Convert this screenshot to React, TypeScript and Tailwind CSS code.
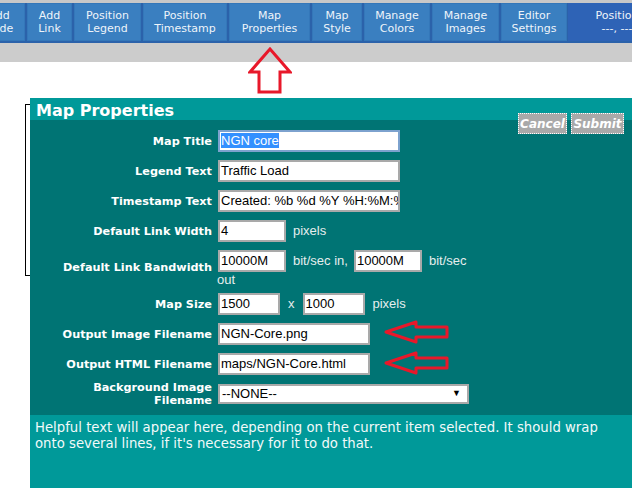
import React from 'react';

const tools = [
  { top: 'Add', bottom: 'Node', w: 'w-[52px]' },
  { top: 'Add', bottom: 'Link', w: 'w-[45px]' },
  { top: 'Position', bottom: 'Legend', w: 'w-[67px]' },
  { top: 'Position', bottom: 'Timestamp', w: 'w-[84px]' },
  { top: 'Map', bottom: 'Properties', w: 'w-[81px]' },
  { top: 'Map', bottom: 'Style', w: 'w-[50px]' },
  { top: 'Manage', bottom: 'Colors', w: 'w-[66px]' },
  { top: 'Manage', bottom: 'Images', w: 'w-[67px]' },
  { top: 'Editor', bottom: 'Settings', w: 'w-[66px]' },
];

const verdana = "font-['DejaVu_Sans',Verdana,sans-serif]";
const arial = "font-['Liberation_Sans',Arial,sans-serif]";

const Field = ({ value, w }: { value: string; w: string }) => (
  <div
    className={`${w} h-[22px] bg-white border-2 border-[#a9a9a9] ${arial} text-[13px] text-black leading-[18px] pl-[1px] overflow-hidden whitespace-nowrap`}
  >
    {value}
  </div>
);

const Row = ({ label, children, h = 'h-[30px]' }: { label: React.ReactNode; children: React.ReactNode; h?: string }) => (
  <div className={`flex items-center ${h}`}>
    <div className={`w-[182px] text-right ${verdana} font-bold text-[11.25px] leading-[13px] text-white`}>{label}</div>
    <div className="ml-[6px] flex items-center">{children}</div>
  </div>
);

const Unit = ({ children, ml = 'ml-[7px]' }: { children: React.ReactNode; ml?: string }) => (
  <span className={`${ml} ${arial} text-[13px] text-[#e6eeee]`}>{children}</span>
);

const LeftArrow = ({ top }: { top: string }) => (
  <svg className={`absolute left-[383px] ${top}`} width="68" height="28" viewBox="0 0 68 28">
    <polygon
      points="3,14 33,4 33,9 64,9 64,19 33,19 33,24"
      fill="none"
      stroke="#e8182a"
      strokeWidth="3"
      strokeLinejoin="round"
    />
  </svg>
);

export default function App() {
  return (
    <div className="relative w-[632px] h-[488px] overflow-hidden bg-white">
      <div className="h-[3px] bg-[#c8c8c8]" />
      <div className="flex h-[40px] bg-[#2b62aa] ml-[-27px] gap-[2px]">
        {tools.map((t) => (
          <div
            key={t.bottom}
            className={`${t.w} shrink-0 h-[38px] bg-[#3a7fc0] border border-[#3477b9] flex flex-col items-center justify-center ${verdana} text-[11px] leading-[13px] text-[#eef4fa]`}
          >
            <span>{t.top}</span>
            <span>{t.bottom}</span>
          </div>
        ))}
        <div
          className={`w-[98px] shrink-0 h-[38px] bg-[#2e63b6] ml-[-1px] flex flex-col items-center justify-center ${verdana} text-[11px] leading-[13px] text-[#eef4fa]`}
        >
          <span>Position</span>
          <span>---, ---</span>
        </div>
      </div>
      <div className="h-[19px] bg-[#cccccc]" />

      <svg className="absolute left-[248px] top-[47px]" width="44" height="47" viewBox="0 0 44 47">
        <polygon
          points="22,2 42,25 32,25 32,45 11,45 11,25 2,25"
          fill="none"
          stroke="#e8182a"
          strokeWidth="3"
          strokeLinejoin="miter"
        />
      </svg>

      <div className="absolute left-[25px] top-[104px] w-[100px] h-[172px] border border-black" />

      <div className="relative ml-[30px] mt-[36px] w-[620px] h-[400px] bg-[#007474]">
        <div className="h-[22px] bg-[#009999] pl-[6px]">
          <span className={`${verdana} font-bold text-[16px] leading-[22px] text-white`}>Map Properties</span>
        </div>
        <div className="absolute left-[488px] top-[15px] flex gap-[4px]">
          <div className={`w-[49px] h-[21px] bg-[#a9a9a9] border border-dotted border-white flex items-center justify-center ${verdana} font-bold italic text-[12px] text-white`}>
            Cancel
          </div>
          <div className={`w-[53px] h-[21px] bg-[#a9a9a9] border border-dotted border-white flex items-center justify-center ${verdana} font-bold italic text-[12px] text-white`}>
            Submit
          </div>
        </div>

        <div className="pt-[6px] pb-[7px]">
          <Row label="Map Title">
            <div className={`w-[182px] h-[22px] bg-white border-2 border-[#7da2ce] ${arial} text-[13px] leading-[18px] pl-[1px] whitespace-nowrap`}>
              <span className="bg-[#3390ff] text-white">NGN core</span>
            </div>
          </Row>
          <Row label="Legend Text">
            <Field value="Traffic Load" w="w-[182px]" />
          </Row>
          <Row label="Timestamp Text">
            <Field value="Created: %b %d %Y %H:%M:%S" w="w-[182px]" />
          </Row>
          <Row label="Default Link Width">
            <Field value="4" w="w-[68px]" />
            <Unit>pixels</Unit>
          </Row>
          <div className="flex items-center h-[43px]">
            <div className={`w-[182px] text-right ${verdana} font-bold text-[11.25px] leading-[13px] text-white`}>
              Default Link Bandwidth
            </div>
            <div className="ml-[6px] flex flex-col self-start pt-[4px]">
              <div className="flex items-center">
                <Field value="10000M" w="w-[68px]" />
                <Unit>bit/sec in,</Unit>
                <div className="ml-[6px]">
                  <Field value="10000M" w="w-[68px]" />
                </div>
                <Unit>bit/sec</Unit>
              </div>
              <span className={`${arial} text-[13px] leading-[16px] text-[#e6eeee] ml-[-1px]`}>out</span>
            </div>
          </div>
          <Row label="Map Size">
            <Field value="1500" w="w-[62px]" />
            <Unit ml="ml-[8px]">x</Unit>
            <div className="ml-[8px]">
              <Field value="1000" w="w-[62px]" />
            </div>
            <Unit ml="ml-[8px]">pixels</Unit>
          </Row>
          <Row label="Output Image Filename">
            <Field value="NGN-Core.png" w="w-[152px]" />
          </Row>
          <Row label="Output HTML Filename">
            <Field value="maps/NGN-Core.html" w="w-[152px]" />
          </Row>
          <Row
            h="h-[29px]"
            label={
              <>
                Background Image
                <br />
                Filename
              </>
            }
          >
            <div className={`w-[251px] h-[20px] bg-white border-2 border-[#a9a9a9] flex items-center justify-between pl-[2px] pr-[6px] ${arial} text-[13px] text-black`}>
              <span>--NONE--</span>
              <span className="text-[9px]">▼</span>
            </div>
          </Row>
        </div>

        <div className={`bg-[#009999] h-[80px] pl-[5px] pr-[38px] pt-[5px] ${verdana} text-[13.25px] leading-[16px] text-[#f2fafa]`}>
          Helpful text will appear here, depending on the current item selected. It should wrap onto several lines, if
          it's necessary for it to do that.
        </div>
      </div>

      <LeftArrow top="top-[318px]" />
      <LeftArrow top="top-[349px]" />
    </div>
  );
}
